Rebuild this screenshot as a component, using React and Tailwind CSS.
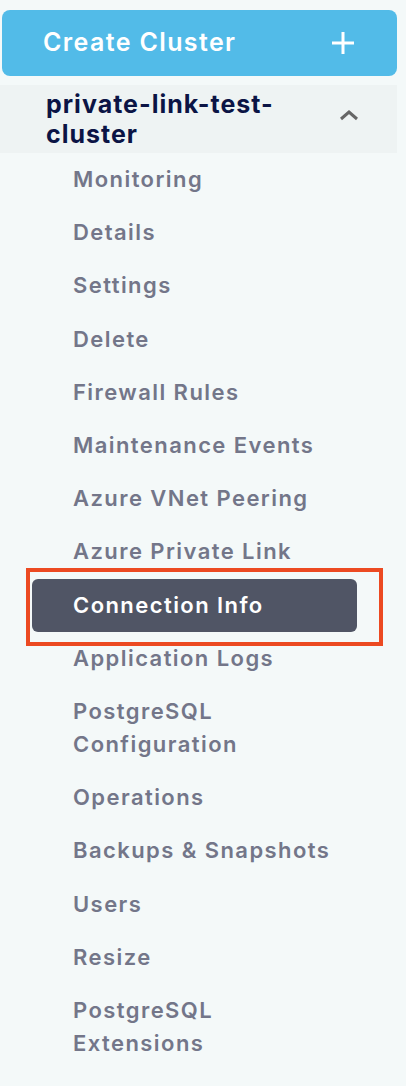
const items = [
  "Monitoring",
  "Details",
  "Settings",
  "Delete",
  "Firewall Rules",
  "Maintenance Events",
  "Azure VNet Peering",
  "Azure Private Link",
  "Connection Info",
  "Application Logs",
  "PostgreSQL Configuration",
  "Operations",
  "Backups & Snapshots",
  "Users",
  "Resize",
  "PostgreSQL Extensions",
];

function NavItem({ label, active }) {
  if (active) {
    return (
      <div className="relative">
        <div className="absolute left-[26px] top-[-11px] w-[357px] h-[78px] border-4 border-[#ec4a22] pointer-events-none" />
        <div className="ml-[32px] w-[325px] rounded-md bg-[#505565] pl-[41px] py-[10.1px] leading-[33px] text-white">
          {label}
        </div>
      </div>
    );
  }
  return (
    <div className="ml-[32px] w-[325px] pl-[41px] pr-[16px] py-[10.1px] leading-[33px] text-[#737689]">
      {label}
    </div>
  );
}

export default function App() {
  return (
    <div
      className="min-h-screen bg-[#f4f9f9] pt-[10px]"
      style={{ fontFamily: "Inter, 'Noto Sans', sans-serif" }}
    >
      <div className="w-[397px]">
        <button className="ml-[2px] flex h-[66px] w-[395px] items-center justify-between rounded-lg bg-[#52bbe8] pl-[41px] pr-[42px] text-[25px] font-semibold tracking-[0.055em] text-white">
          <span>Create Cluster</span>
          <svg width="24" height="24" viewBox="0 0 24 24" fill="none" stroke="white" strokeWidth="3">
            <path d="M12 1v22M1 12h22" />
          </svg>
        </button>

        <div className="mt-[9px] flex items-start justify-between bg-[#eef3f3] pl-[46px] pr-[38px] pt-[4px] pb-[4px]">
          <div className="text-[25px] font-bold leading-[30px] tracking-[0.04em] text-[#0b1445]">
            private-link-test-
            <br />
            cluster
          </div>
          <svg className="mt-[20px]" width="20" height="12" viewBox="0 0 20 12" fill="none" stroke="#666" strokeWidth="3">
            <path d="M2 10l8-7 8 7" />
          </svg>
        </div>

        <nav className="text-[22px] font-semibold tracking-[0.065em]">
          {items.map((it) => (
            <NavItem key={it} label={it} active={it === "Connection Info"} />
          ))}
        </nav>
      </div>
    </div>
  );
}
